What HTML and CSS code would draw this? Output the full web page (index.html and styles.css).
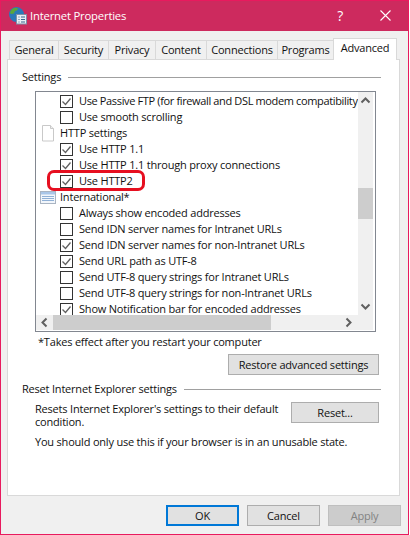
FILE: index.html
```html
<!DOCTYPE html>
<html lang="en">
  <head>
    <meta charset="UTF-8" />
    <meta name="viewport" content="width=device-width, initial-scale=1.0" />
    <title>Internet Properties</title>
    <link rel="stylesheet" href="styles.css">
  </head>
  <body>
    <div class="window">
      <div class="titlebar">
        <svg class="app-icon" width="18" height="18" viewBox="0 0 18 18">
          <circle cx="7.5" cy="7.5" r="7.5" fill="#2a79b8" />
          <path d="M4 1.5c2-1 4-1 5 0l-1 2-2 .5-1 2.500-3 .5-1-1c.3-2 1.500-3.500 3-4.500z" fill="#5aa63c" />
          <path d="M8 8l4 1 1 3-3 2.500-1-2.500z" fill="#5aa63c" />
          <rect x="7.500" y="7.500" width="10" height="9.500" fill="#e9eef5" stroke="#7d8fa8" />
          <path d="M9.500 10h1M12 10h4M9.500 12.500h1M12 12.500h4M9.500 15h1M12 15h4" stroke="#39658f" />
        </svg>
        <span class="title">Internet Properties</span>
        <span class="help">?</span>
        <svg class="close" width="11" height="11" viewBox="0 0 11 11">
          <path d="M.5.5l10 10M10.500.5l-10 10" stroke="#fff" stroke-width="1.100" fill="none" />
        </svg>
      </div>

      <div class="tabs">
        <div class="tab">General</div>
        <div class="tab">Security</div>
        <div class="tab">Privacy</div>
        <div class="tab">Content</div>
        <div class="tab">Connections</div>
        <div class="tab">Programs</div>
        <div class="tab tab-active">Advanced</div>
      </div>

      <div class="panel">
        <div class="group-head settings-head">
          <span>Settings</span>
          <span class="group-line"></span>
        </div>

        <div class="list">
          <div class="list-items">
            <div class="row row-tight"><span class="check on"></span><span class="nowrap">Use Passive FTP (for firewall and DSL modem compatibility</span></div>
            <div class="row"><span class="check"></span><span class="nowrap">Use smooth scrolling</span></div>
            <div class="row row-head">
              <svg class="head-icon" width="16" height="17" viewBox="0 0 16 17">
                <path d="M2.500.5h8l3 3v12.500h-11z" fill="#fff" stroke="#c9c9c9" />
                <path d="M10.500.5v3h3" fill="#efefef" stroke="#c9c9c9" />
              </svg>
              <span class="nowrap">HTTP settings</span>
            </div>
            <div class="row"><span class="check on"></span><span class="nowrap">Use HTTP 1.1</span></div>
            <div class="row"><span class="check on"></span><span class="nowrap">Use HTTP 1.1 through proxy connections</span></div>
            <div class="row row-marked">
              <span class="check on"></span><span class="nowrap">Use HTTP2</span>
              <span class="marker"></span>
            </div>
            <div class="row row-head">
              <svg class="head-icon" width="16" height="13" viewBox="0 0 16 13">
                <rect x=".5" y=".5" width="15" height="12" fill="#f2f6fb" stroke="#a9b4c2" />
                <rect x="1" y="1" width="14" height="2.500" fill="#a9c6e8" />
                <path d="M2 5.500h12M2 7.500h12M2 9.500h12" stroke="#8fb0d6" />
              </svg>
              <span class="nowrap">International*</span>
            </div>
            <div class="row"><span class="check"></span><span class="nowrap">Always show encoded addresses</span></div>
            <div class="row"><span class="check"></span><span class="nowrap">Send IDN server names for Intranet URLs</span></div>
            <div class="row"><span class="check on"></span><span class="nowrap">Send IDN server names for non-Intranet URLs</span></div>
            <div class="row"><span class="check on"></span><span class="nowrap">Send URL path as UTF-8</span></div>
            <div class="row"><span class="check"></span><span class="nowrap">Send UTF-8 query strings for Intranet URLs</span></div>
            <div class="row"><span class="check"></span><span class="nowrap">Send UTF-8 query strings for non-Intranet URLs</span></div>
            <div class="row"><span class="check on"></span><span class="nowrap">Show Notification bar for encoded addresses</span></div>
          </div>

          <div class="vscroll">
            <svg class="arrow" width="15" height="17" viewBox="0 0 15 17"><path d="M3.500 10.500l4-4 4 4" stroke="#606060" stroke-width="2" fill="none" /></svg>
            <div class="vthumb"></div>
            <svg class="arrow arrow-end" width="15" height="17" viewBox="0 0 15 17"><path d="M3.500 6.500l4 4 4-4" stroke="#606060" stroke-width="2" fill="none" /></svg>
          </div>

          <div class="hscroll">
            <svg class="arrow" width="17" height="15" viewBox="0 0 17 15"><path d="M10.500 3.500l-4 4 4 4" stroke="#606060" stroke-width="2" fill="none" /></svg>
            <div class="hthumb"></div>
            <svg class="arrow arrow-right" width="17" height="15" viewBox="0 0 17 15"><path d="M6.500 3.500l4 4-4 4" stroke="#606060" stroke-width="2" fill="none" /></svg>
          </div>
        </div>

        <div class="note">*Takes effect after you restart your computer</div>
        <div class="restore-row">
          <button class="button restore-button">Restore advanced settings</button>
        </div>

        <div class="group-head">
          <span>Reset Internet Explorer settings</span>
          <span class="group-line"></span>
        </div>
        <div class="reset-body">
          <div class="reset-text">Resets Internet Explorer's settings to their default condition.</div>
          <button class="button reset-button">Reset...</button>
        </div>
        <div class="reset-warning">You should only use this if your browser is in an unusable state.</div>
      </div>

      <div class="footer">
        <button class="button footer-button default-button">OK</button>
        <button class="button footer-button">Cancel</button>
        <button class="button footer-button disabled-button">Apply</button>
      </div>
    </div>
  </body>
</html>
```

FILE: styles.css
```css
* {
  box-sizing: border-box;
}

body {
  margin: 0;
  background-color: #fff;
  font-family: "Open Sans", sans-serif;
  font-size: 11px;
  line-height: 16px;
  letter-spacing: -0.2px;
  color: #111;
}

.window {
  width: 409px;
  height: 535px;
  background-color: #f0f0f0;
  border: 1px solid #e81a5e;
  display: flex;
  flex-direction: column;
}

.nowrap {
  white-space: nowrap;
}

/* title bar */
.titlebar {
  height: 30px;
  background-color: #cd2a5e;
  color: #fff;
  display: flex;
  align-items: center;
  padding: 0 0 1px 8px;
}

.app-icon {
  margin-right: 3px;
}

.title {
  flex: 1;
  font-size: 11.3px;
}

.help {
  font-size: 14px;
  margin-right: 37px;
}

.close {
  margin-right: 17px;
}

/* tabs */
.tabs {
  display: grid;
  grid-template-columns: 49px 50px 47px 51px 71px 56px 64px;
  align-items: end;
  padding: 7px 0 0 8px;
}

.tab {
  height: 19px;
  background-color: #f0f0f0;
  border: 1px solid #d9d9d9;
  border-bottom: none;
  border-right: none;
  text-align: center;
  line-height: 17px;
}

.tab-active {
  position: relative;
  z-index: 1;
  height: 22px;
  margin-bottom: -1px;
  background-color: #fff;
  border-right: 1px solid #d9d9d9;
  line-height: 18px;
}

/* main panel */
.panel {
  width: 393px;
  height: 437px;
  margin-left: 6px;
  background-color: #fff;
  border: 1px solid #d9d9d9;
}

.group-head {
  display: flex;
  align-items: center;
  gap: 7px;
  margin: 0 18px 0 14px;
  height: 16px;
}

.settings-head {
  margin-top: 9px;
  margin-bottom: 6px;
}

.group-line {
  flex: 1;
  height: 1px;
  background-color: #a0a0a0;
}

/* settings list */
.list {
  width: 341px;
  height: 241px;
  margin-left: 27px;
  border: 1px solid #828790;
  padding: 0 2px 1px 0;
  display: grid;
  grid-template-columns: 322px 15px;
  grid-template-rows: 223px 15px;
}

.list-items {
  overflow: hidden;
  padding-top: 1px;
}

.row {
  height: 16px;
  display: flex;
  align-items: center;
  gap: 6px;
  padding-left: 24px;
}

.row-tight {
  letter-spacing: -0.36px;
}

.row-head {
  padding-left: 4px;
  gap: 4px;
}

.row-marked {
  position: relative;
}

.head-icon {
  flex: none;
}

.check {
  flex: none;
  width: 13px;
  height: 13px;
  border: 1px solid #333;
  background-color: #fff;
}

.check.on {
  background: #fff url("data:image/svg+xml,%3Csvg xmlns='http://www.w3.org/2000/svg' width='11' height='11'%3E%3Cpath d='M1.500 5.500l3 3 5-6' stroke='%23606060' stroke-width='1.300' fill='none'/%3E%3C/svg%3E") no-repeat center;
}

/* red annotation drawn over the list */
.marker {
  position: absolute;
  left: 11px;
  top: -3px;
  width: 98px;
  height: 21px;
  border: 3px solid #e60f20;
  border-radius: 7px;
}

/* scrollbars */
.vscroll {
  background-color: #f0f0f0;
  display: flex;
  flex-direction: column;
}

.vthumb {
  height: 31px;
  margin-top: 79px;
  background-color: #cdcdcd;
}

.hscroll {
  grid-column: 1 / 3;
  background-color: #f0f0f0;
  display: flex;
}

.hthumb {
  width: 218px;
  background-color: #cdcdcd;
}

.arrow {
  flex: none;
}

.arrow-end {
  margin-top: auto;
}

.arrow-right {
  margin-left: 69px;
}

/* below the list */
.note {
  margin: 2px 0 0 30px;
  height: 16px;
}

.restore-row {
  display: flex;
  justify-content: flex-end;
  padding: 4px 20px 6px 0;
}

.button {
  height: 21px;
  padding: 0;
  background-color: #e1e1e1;
  border: 1px solid #adadad;
  font-family: inherit;
  font-size: 11px;
  letter-spacing: inherit;
  color: #111;
}

.restore-button {
  width: 151px;
}

.reset-body {
  display: flex;
  justify-content: space-between;
  margin: 5px 20px 0 27px;
  line-height: 13px;
}

.reset-text {
  width: 250px;
}

.reset-button {
  width: 88px;
}

.reset-warning {
  margin-left: 27px;
  padding-top: 7px;
  line-height: 13px;
}

/* bottom buttons */
.footer {
  display: flex;
  justify-content: flex-end;
  gap: 8px;
  padding: 9px 7px 0 0;
}

.footer-button {
  width: 73px;
}

.default-button {
  border: 2px solid #0078d7;
}

.disabled-button {
  background-color: #ccc;
  border-color: #bfbfbf;
  color: #838383;
}
```
